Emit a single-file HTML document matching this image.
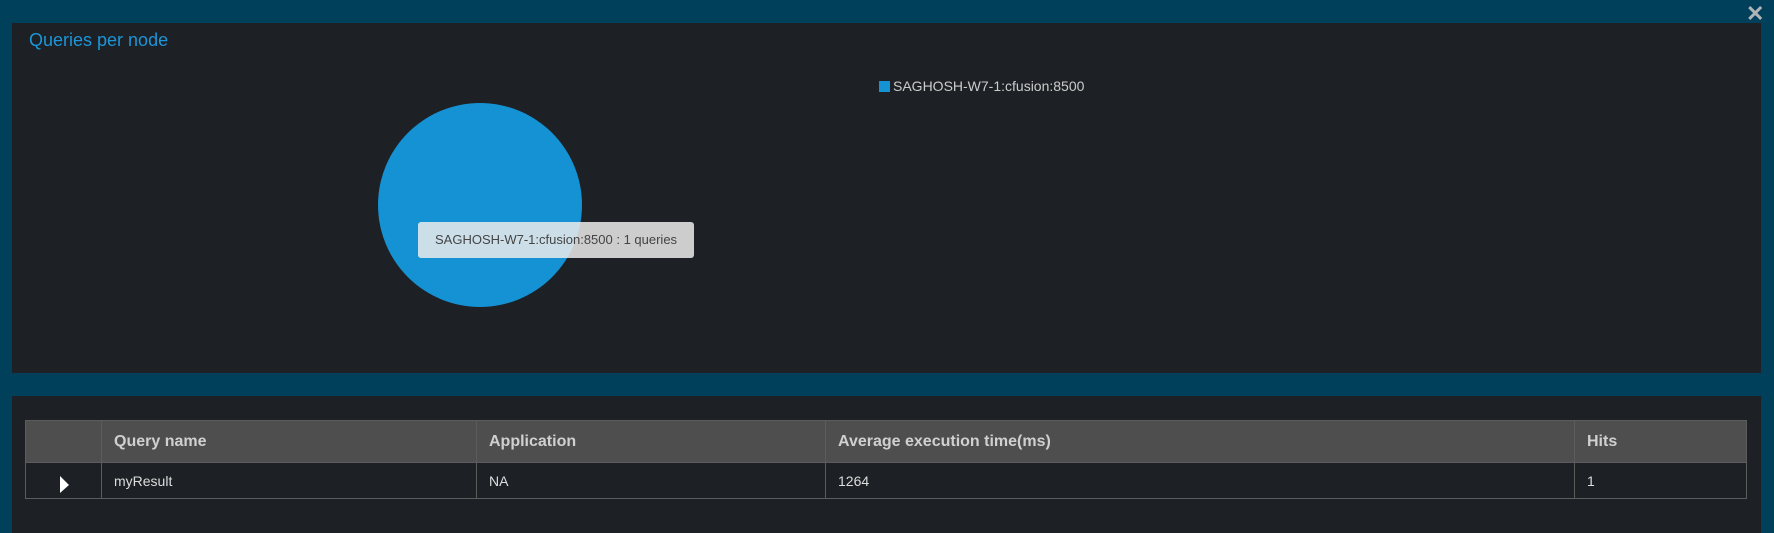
<!DOCTYPE html>
<html><head><style>
body{margin:0;width:1774px;height:533px;background:#00405a;position:relative;overflow:hidden;font-family:"Liberation Sans",sans-serif}
.p{position:absolute;background:#1d2024}
.x{position:absolute;left:1746px;top:3px;color:#b0b4b8;font-size:22px;font-weight:bold;line-height:22px}
table{position:absolute;left:25px;top:420px;width:1722px;border-collapse:collapse;font-size:14px;color:#ddd}
th,td{border:1px solid #5c5c5c;text-align:left;padding:0 0 0 12px}
th{background:#4e4e4e;height:41px;font-size:16px;font-weight:600;color:#d0d0d0}
td{height:35px}
</style></head><body>
<div class="x">✕</div>
<div class="p" style="left:12px;top:23px;width:1749px;height:350px">
<div style="position:absolute;left:17px;top:7px;color:#1d95d8;font-size:18px">Queries per node</div>
<div style="position:absolute;left:366px;top:80px;width:204px;height:204px;border-radius:50%;background:#1592d4"></div>
<div style="position:absolute;left:406px;top:199px;width:276px;height:36px;border-radius:3px;background:rgba(236,236,236,0.85);color:#444;font-size:13px;line-height:36px;text-indent:17px">SAGHOSH-W7-1:cfusion:8500 : 1 queries</div>
<div style="position:absolute;left:867px;top:58px;width:11px;height:11px;background:#1592d4"></div>
<div style="position:absolute;left:881px;top:55px;color:#ccc;font-size:14px">SAGHOSH-W7-1:cfusion:8500</div>
</div>
<div class="p" style="left:12px;top:396px;width:1749px;height:137px"></div>
<table>
<tr><th style="width:63px"></th><th style="width:362px">Query name</th><th style="width:336px">Application</th><th style="width:736px">Average execution time(ms)</th><th>Hits</th></tr>
<tr><td style="padding-left:34px"><svg width="10" height="18" style="display:block;margin-top:7px"><path d="M0 1L9 10L0 18Z" fill="#fff"/></svg></td><td>myResult</td><td>NA</td><td>1264</td><td>1</td></tr>
</table>
</body></html>
